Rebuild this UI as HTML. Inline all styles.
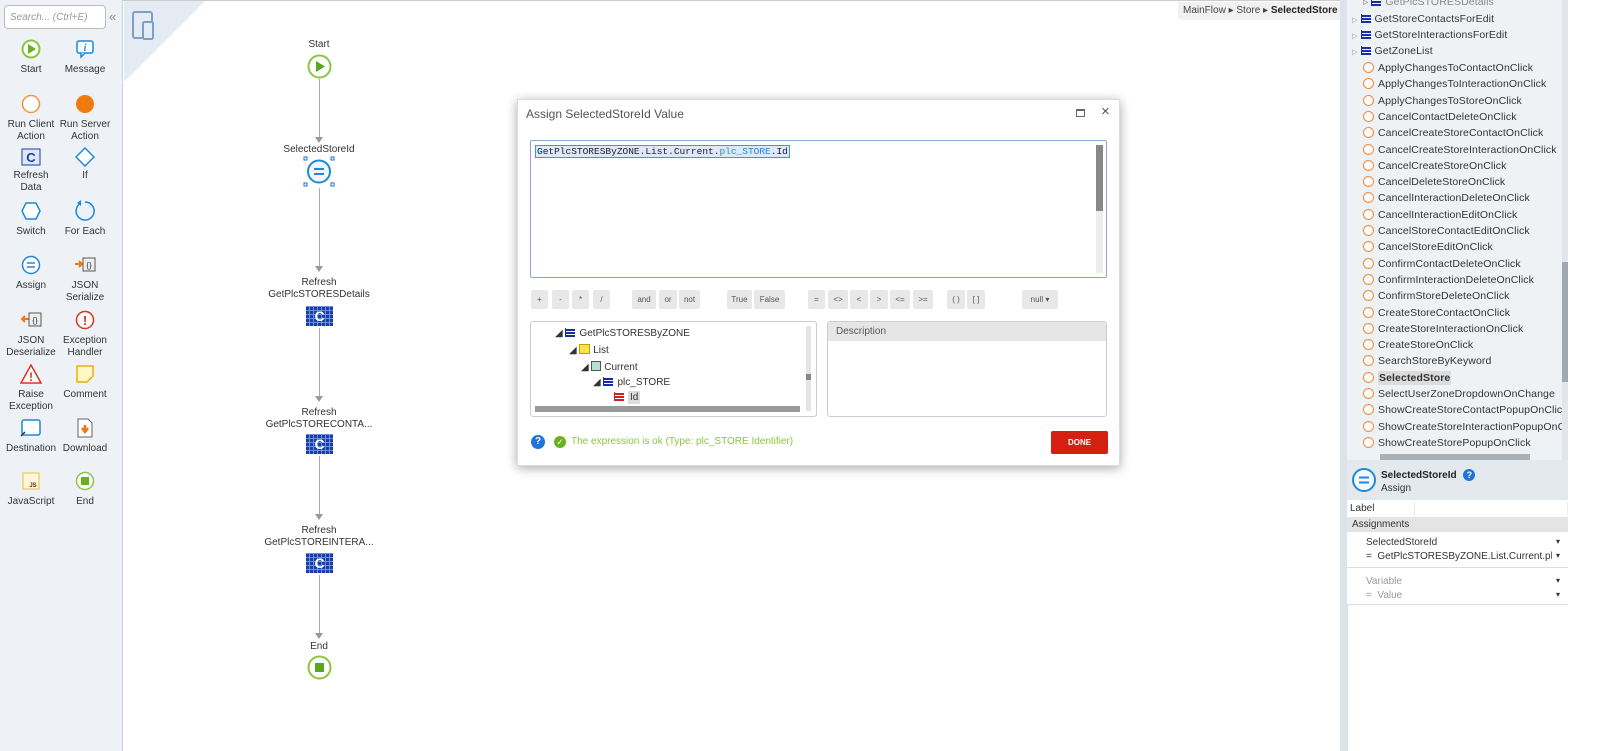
<!DOCTYPE html>
<html><head><meta charset="utf-8"><style>
*{box-sizing:border-box;margin:0;padding:0}
body{width:1600px;height:751px;overflow:hidden;background:#fff;font-family:"Liberation Sans",sans-serif;font-size:10px;color:#333;position:relative}
.abs{position:absolute}
#tb{left:0;top:0;width:123px;height:751px;background:#eef2f6;border-right:1px solid #c9d2da}
.ti{position:absolute;width:60px;text-align:center;font-size:10px;color:#333;line-height:12px}
.ti .ic{height:22px;display:flex;justify-content:center;align-items:center;margin-bottom:4px}
.flab{position:absolute;text-align:center;font-size:10px;color:#333;line-height:12px;width:140px;left:249px}
.line{position:absolute;left:319px;width:1px;background:#aaa}
.arr{position:absolute;left:315px;width:0;height:0;border-left:4px solid transparent;border-right:4px solid transparent;border-top:6px solid #999}
.ref{position:absolute;left:306px;width:27px;height:20px;background:#1a3ea8;background-image:repeating-linear-gradient(90deg,transparent 0 3px,#6f8ee0 3px 4px),repeating-linear-gradient(0deg,transparent 0 3px,#6f8ee0 3px 4px);display:flex;align-items:center;justify-content:center;color:#fff;font-weight:bold;font-size:14px}
#dlg{left:517px;top:99px;width:603px;height:367px;background:#fff;border:1px solid #ddd;box-shadow:0 2px 10px rgba(0,0,0,.35)}
.btn{position:absolute;top:190px;height:19px;background:#e8e8e8;border-radius:2px;font-size:8px;color:#555;text-align:center;line-height:19px}
.rl{position:absolute;left:1363px;font-size:10.5px;letter-spacing:0.1px;color:#333;height:16px;line-height:16px;white-space:nowrap}
.rl .o{display:inline-block;width:11px;height:11px;border:1.5px solid #f08a3c;border-radius:50%;vertical-align:-2px;margin-right:4px;background:#fff}
.grid{display:inline-block;width:10px;height:9px;background:repeating-linear-gradient(0deg,#1a2ea0 0 2px,transparent 2px 3px);vertical-align:-1px;margin-right:4px;border-left:1px solid #1a2ea0}
</style></head><body>
<div id="tb" class="abs">
 <div class="abs" style="left:4px;top:5px;width:102px;height:24px;border:1px solid #bbb;border-radius:4px;background:#fff;font-size:10px;color:#999;font-style:italic;padding:6px 5px">Search... (Ctrl+E)</div>
 <div class="abs" style="left:109px;top:9px;font-size:13px;color:#888">«</div>
 <div class="ti" style="left:1px;top:38px"><div class="ic"><svg width="20" height="20"><circle cx="10" cy="10" r="8.5" fill="#fff" stroke="#8cc63f" stroke-width="2"/><path d="M7 5 L15 10 L7 15Z" fill="#6ab023"/></svg></div>Start</div>
 <div class="ti" style="left:55px;top:38px"><div class="ic"><svg width="20" height="20"><rect x="2" y="2" width="16" height="12" rx="2" fill="#fff" stroke="#1e88d9" stroke-width="1.5"/><path d="M6 14 L6 18 L10 14" fill="#fff" stroke="#1e88d9" stroke-width="1.5"/><text x="10" y="12" font-size="10" font-style="italic" font-weight="bold" fill="#1e88d9" text-anchor="middle" font-family="Liberation Serif">i</text></svg></div>Message</div>
 <div class="ti" style="left:1px;top:93px"><div class="ic"><svg width="20" height="20"><circle cx="10" cy="10" r="8.5" fill="#fff" stroke="#f5923e" stroke-width="1.5"/></svg></div>Run Client<br>Action</div>
 <div class="ti" style="left:55px;top:93px"><div class="ic"><svg width="20" height="20"><circle cx="10" cy="10" r="9" fill="#f07a10"/></svg></div>Run Server<br>Action</div>
 <div class="ti" style="left:1px;top:148px"><div class="ic" style="height:18px"><svg width="20" height="18"><rect x="1" y="1" width="18" height="16" fill="#dfe8f8" stroke="#1a3ea8"/><text x="10" y="14" font-size="13" font-weight="bold" fill="#1a3ea8" text-anchor="middle">C</text></svg></div>Refresh<br>Data</div>
 <div class="ti" style="left:55px;top:148px"><div class="ic" style="height:18px"><svg width="20" height="20"><path d="M10 1 L19 10 L10 19 L1 10Z" fill="#fff" stroke="#1e88d9" stroke-width="1.5"/></svg></div>If</div>
 <div class="ti" style="left:1px;top:200px"><div class="ic"><svg width="20" height="20"><path d="M5 2 L15 2 L19 10 L15 18 L5 18 L1 10Z" fill="#fff" stroke="#1e88d9" stroke-width="1.5"/></svg></div>Switch</div>
 <div class="ti" style="left:55px;top:200px"><div class="ic"><svg width="22" height="22"><path d="M7 3 A9 9 0 1 0 11 2" fill="none" stroke="#1e88d9" stroke-width="1.5"/><path d="M7 0 L7 6 L3 3Z" fill="#1e88d9"/></svg></div>For Each</div>
 <div class="ti" style="left:1px;top:254px"><div class="ic"><svg width="20" height="20"><circle cx="10" cy="10" r="8.5" fill="#fff" stroke="#1e88d9" stroke-width="1.5"/><path d="M6 8h8M6 12h8" stroke="#1e88d9" stroke-width="1.5"/></svg></div>Assign</div>
 <div class="ti" style="left:55px;top:254px"><div class="ic"><svg width="22" height="18"><path d="M1 8h7M5 5l3 3-3 3" stroke="#f07a10" stroke-width="2" fill="none"/><rect x="9" y="2" width="12" height="13" fill="#eee" stroke="#555"/><text x="15" y="12" font-size="8" text-anchor="middle" fill="#333">{}</text></svg></div>JSON<br>Serialize</div>
 <div class="ti" style="left:1px;top:309px"><div class="ic"><svg width="22" height="18"><path d="M9 8H2M5 5L2 8l3 3" stroke="#f07a10" stroke-width="2" fill="none"/><rect x="9" y="2" width="12" height="13" fill="#eee" stroke="#555"/><text x="15" y="12" font-size="8" text-anchor="middle" fill="#333">{}</text></svg></div>JSON<br>Deserialize</div>
 <div class="ti" style="left:55px;top:309px"><div class="ic"><svg width="20" height="20"><circle cx="10" cy="10" r="8.5" fill="#fff" stroke="#d9341f" stroke-width="1.5"/><text x="10" y="15" font-size="13" font-weight="bold" fill="#d9341f" text-anchor="middle">!</text></svg></div>Exception<br>Handler</div>
 <div class="ti" style="left:1px;top:363px"><div class="ic"><svg width="22" height="20"><path d="M11 1 L21 19 L1 19Z" fill="#fff" stroke="#d9341f" stroke-width="1.5"/><text x="11" y="17" font-size="12" font-weight="bold" fill="#d9341f" text-anchor="middle">!</text></svg></div>Raise<br>Exception</div>
 <div class="ti" style="left:55px;top:363px"><div class="ic"><svg width="18" height="18"><path d="M1 1h16v10l-6 6H1Z" fill="#fff7c8" stroke="#e7b10a" stroke-width="1.5"/></svg></div>Comment</div>
 <div class="ti" style="left:1px;top:417px"><div class="ic"><svg width="22" height="18"><rect x="2" y="1" width="18" height="15" rx="2" fill="#fff" stroke="#1e88d9" stroke-width="1.5"/><path d="M1 17 L5 13" stroke="#333" stroke-width="1.5"/></svg></div>Destination</div>
 <div class="ti" style="left:55px;top:417px"><div class="ic"><svg width="18" height="20"><path d="M2 1h10l4 4v14H2Z" fill="#fff" stroke="#666"/><path d="M9 7v6M6 10l3 4 3-4" stroke="#f07a10" stroke-width="2.5" fill="none"/></svg></div>Download</div>
 <div class="ti" style="left:1px;top:470px"><div class="ic"><svg width="18" height="18"><rect x="1" y="1" width="16" height="16" fill="#fff6d5" stroke="#e8c050"/><text x="11" y="15" font-size="6" font-weight="bold" fill="#333" text-anchor="middle">JS</text></svg></div>JavaScript</div>
 <div class="ti" style="left:55px;top:470px"><div class="ic"><svg width="20" height="20"><circle cx="10" cy="10" r="8.5" fill="#fff" stroke="#8cc63f" stroke-width="1.5"/><rect x="6" y="6" width="8" height="8" fill="#6ab023"/></svg></div>End</div>
</div>
<svg class="abs" style="left:124px;top:0" width="82" height="82"><path d="M0 0H82L0 82Z" fill="#e4ebf2"/><rect x="9" y="12" width="19" height="26" rx="2" fill="none" stroke="#7da0c8" stroke-width="2"/><rect x="19" y="22" width="10" height="17" rx="1.5" fill="#e4ebf2" stroke="#7da0c8" stroke-width="2"/></svg>
<div class="abs" style="left:123px;top:0;width:1218px;height:1px;background:#ccc"></div>
<div class="abs" style="left:1178px;top:2px;width:162px;height:18px;background:#f1f1f1;border-radius:0 0 0 4px;font-size:10px;color:#444;line-height:18px;padding-left:5px">MainFlow ▸ Store ▸ <b style="color:#222">SelectedStore</b></div>
<div class="flab" style="top:39px">Start</div>
<svg class="abs" style="left:307px;top:54px" width="25" height="25"><circle cx="12.5" cy="12.5" r="11" fill="#fff" stroke="#8cc63f" stroke-width="2"/><path d="M9 7 L18 12.5 L9 18Z" fill="#56a91c"/></svg>
<div class="line" style="top:79px;height:60px"></div><div class="arr" style="top:137px"></div>
<div class="flab" style="top:144px">SelectedStoreId</div>
<svg class="abs" style="left:302px;top:156px" width="35" height="32"><rect x="2" y="1" width="3" height="3" fill="none" stroke="#1e6fd9"/><rect x="29" y="1" width="3" height="3" fill="none" stroke="#1e6fd9"/><rect x="2" y="27" width="3" height="3" fill="none" stroke="#1e6fd9"/><rect x="29" y="27" width="3" height="3" fill="none" stroke="#1e6fd9"/><circle cx="17" cy="15.5" r="11" fill="#f4f8fc" stroke="#1e88d9" stroke-width="2"/><path d="M12 13h10M12 18h10" stroke="#1e88d9" stroke-width="2"/></svg>
<div class="line" style="top:188px;height:80px"></div><div class="arr" style="top:266px"></div>
<div class="flab" style="top:277px">Refresh<br>GetPlcSTORESDetails</div>
<div class="ref" style="top:306px">C</div>
<div class="line" style="top:328px;height:70px"></div><div class="arr" style="top:396px"></div>
<div class="flab" style="top:407px">Refresh<br>GetPlcSTORECONTA...</div>
<div class="ref" style="top:434px">C</div>
<div class="line" style="top:456px;height:60px"></div><div class="arr" style="top:514px"></div>
<div class="flab" style="top:525px">Refresh<br>GetPlcSTOREINTERA...</div>
<div class="ref" style="top:553px">C</div>
<div class="line" style="top:575px;height:60px"></div><div class="arr" style="top:633px"></div>
<div class="flab" style="top:641px">End</div>
<svg class="abs" style="left:307px;top:655px" width="25" height="25"><circle cx="12.5" cy="12.5" r="11" fill="#fff" stroke="#8cc63f" stroke-width="2"/><rect x="8" y="8" width="9" height="9" fill="#56a91c"/></svg>
<div id="dlg" class="abs">
 <div class="abs" style="left:8px;top:7px;font-size:12px;color:#555">Assign SelectedStoreId Value</div>
 <div class="abs" style="left:558px;top:9px;width:9px;height:8px;border:1px solid #666;border-top-width:2px"></div>
 <div class="abs" style="left:583px;top:3px;font-size:15px;color:#555">×</div>
 <div class="abs" style="left:12px;top:40px;width:577px;height:138px;border:1px solid #8aa7c7;border-radius:2px">
  <div class="abs" style="left:4px;top:4px;font-family:'Liberation Mono',monospace;font-size:9.5px;color:#222;background:#dce9fb;border:1px solid #4a90e2;padding:0 1px">GetPlcSTORESByZONE.List.Current.<span style="color:#2b8ac0">plc_STORE</span>.Id</div>
  <div class="abs" style="right:3px;top:4px;width:7px;height:128px;background:#eee"><div style="height:66px;background:#888"></div></div>
 </div>
 <div class="btn" style="left:13px;width:17px">+</div><div class="btn" style="left:34px;width:17px">-</div><div class="btn" style="left:54px;width:17px">*</div><div class="btn" style="left:75px;width:17px">/</div>
 <div class="btn" style="left:114px;width:24px">and</div><div class="btn" style="left:141px;width:18px">or</div><div class="btn" style="left:161px;width:21px">not</div>
 <div class="btn" style="left:209px;width:25px">True</div><div class="btn" style="left:236px;width:31px">False</div>
 <div class="btn" style="left:290px;width:17px">=</div><div class="btn" style="left:310px;width:20px">&lt;&gt;</div><div class="btn" style="left:332px;width:18px">&lt;</div><div class="btn" style="left:352px;width:18px">&gt;</div><div class="btn" style="left:372px;width:20px">&lt;=</div><div class="btn" style="left:395px;width:20px">&gt;=</div>
 <div class="btn" style="left:429px;width:18px">( )</div><div class="btn" style="left:449px;width:18px">[ ]</div>
 <div class="btn" style="left:504px;width:36px">null ▾</div>
 <div class="abs" style="left:12px;top:221px;width:287px;height:96px;border:1px solid #ccc;border-radius:3px;font-size:10px;color:#333">
  <div class="abs" style="left:24px;top:6px">◢ <span class="grid"></span>GetPlcSTORESByZONE</div>
  <div class="abs" style="left:38px;top:22px">◢ <span style="display:inline-block;width:11px;height:10px;border:1px solid #c89a00;background:#ffe14a;vertical-align:-1px"></span> List</div>
  <div class="abs" style="left:50px;top:39px">◢ <span style="display:inline-block;width:10px;height:10px;border:1px solid #555;background:#b4e4cc;vertical-align:-1px"></span> Current</div>
  <div class="abs" style="left:62px;top:55px">◢ <span class="grid"></span>plc_STORE</div>
  <div class="abs" style="left:83px;top:70px"><span class="grid" style="background:repeating-linear-gradient(0deg,#d02020 0 2px,transparent 2px 3px);border-color:#d02020"></span><span style="background:#ddd;padding:1px 2px">Id</span></div>
  <div class="abs" style="left:4px;top:84px;width:265px;height:6px;background:#999"></div>
  <div class="abs" style="left:275px;top:4px;width:5px;height:85px;background:#e4e4e4"><div style="margin-top:48px;height:6px;background:#888"></div></div>
 </div>
 <div class="abs" style="left:309px;top:221px;width:280px;height:96px;border:1px solid #ccc;border-radius:3px">
  <div style="height:19px;background:#e6e6e6;font-size:10px;color:#555;padding:4px 8px">Description</div>
 </div>
 <div class="abs" style="left:13px;top:335px;width:14px;height:14px;border-radius:50%;background:#1e74d9;color:#fff;font-size:10px;font-weight:bold;text-align:center;line-height:14px">?</div>
 <div class="abs" style="left:36px;top:336px;width:12px;height:12px;border-radius:50%;background:#6ab023;color:#fff;font-size:9px;text-align:center;line-height:12px">✓</div>
 <div class="abs" style="left:53px;top:336px;font-size:10px;color:#8cc63f">The expression is ok (Type: plc_STORE Identifier)</div>
 <div class="abs" style="left:533px;top:331px;width:57px;height:23px;background:#d32010;border-radius:2px;color:#fff;font-size:8px;font-weight:bold;text-align:center;line-height:23px">DONE</div>
</div>
<div class="abs" style="left:1340px;top:0;width:7px;height:751px;background:#dde3e8"></div>
<div class="abs" style="left:1347px;top:0;width:221px;height:460px;background:#eef2f5"></div>
<div class="abs" style="left:1562px;top:0;width:6px;height:460px;background:#e2e6ea"><div style="margin-top:262px;height:120px;background:#a0a8b0"></div></div>
<div class="abs" style="left:1380px;top:454px;width:150px;height:6px;background:#a8b0b8"></div>
<div class="abs" style="left:1568px;top:0;width:32px;height:751px;background:#fff"></div>
<div class="rl" style="top:-6px;color:#888">▹ <span class="grid"></span>GetPlcSTORESDetails</div>
<div class="rl" style="top:11px;left:1352px"><span style="color:#999;font-size:7px">▷</span> <span class="grid"></span>GetStoreContactsForEdit</div>
<div class="rl" style="top:27px;left:1352px"><span style="color:#999;font-size:7px">▷</span> <span class="grid"></span>GetStoreInteractionsForEdit</div>
<div class="rl" style="top:43px;left:1352px"><span style="color:#999;font-size:7px">▷</span> <span class="grid"></span>GetZoneList</div>
<div class="rl" style="top:60px"><span class="o"></span>ApplyChangesToContactOnClick</div>
<div class="rl" style="top:76.3px"><span class="o"></span>ApplyChangesToInteractionOnClick</div>
<div class="rl" style="top:92.6px"><span class="o"></span>ApplyChangesToStoreOnClick</div>
<div class="rl" style="top:108.9px"><span class="o"></span>CancelContactDeleteOnClick</div>
<div class="rl" style="top:125.2px"><span class="o"></span>CancelCreateStoreContactOnClick</div>
<div class="rl" style="top:141.5px"><span class="o"></span>CancelCreateStoreInteractionOnClick</div>
<div class="rl" style="top:157.8px"><span class="o"></span>CancelCreateStoreOnClick</div>
<div class="rl" style="top:174.1px"><span class="o"></span>CancelDeleteStoreOnClick</div>
<div class="rl" style="top:190.4px"><span class="o"></span>CancelInteractionDeleteOnClick</div>
<div class="rl" style="top:206.7px"><span class="o"></span>CancelInteractionEditOnClick</div>
<div class="rl" style="top:223px"><span class="o"></span>CancelStoreContactEditOnClick</div>
<div class="rl" style="top:239.3px"><span class="o"></span>CancelStoreEditOnClick</div>
<div class="rl" style="top:255.6px"><span class="o"></span>ConfirmContactDeleteOnClick</div>
<div class="rl" style="top:271.9px"><span class="o"></span>ConfirmInteractionDeleteOnClick</div>
<div class="rl" style="top:288.2px"><span class="o"></span>ConfirmStoreDeleteOnClick</div>
<div class="rl" style="top:304.5px"><span class="o"></span>CreateStoreContactOnClick</div>
<div class="rl" style="top:320.8px"><span class="o"></span>CreateStoreInteractionOnClick</div>
<div class="rl" style="top:337.1px"><span class="o"></span>CreateStoreOnClick</div>
<div class="rl" style="top:353.4px"><span class="o"></span>SearchStoreByKeyword</div>
<div class="rl" style="top:369.7px"><span class="o"></span><b style="background:#dcdcdc;padding:1px 1px">SelectedStore</b></div>
<div class="rl" style="top:386px"><span class="o"></span>SelectUserZoneDropdownOnChange</div>
<div class="rl" style="top:402.3px"><span class="o"></span>ShowCreateStoreContactPopupOnClick</div>
<div class="rl" style="top:418.6px"><span class="o"></span>ShowCreateStoreInteractionPopupOnClick</div>
<div class="rl" style="top:434.9px"><span class="o"></span>ShowCreateStorePopupOnClick</div>
<div class="abs" style="left:1562px;top:0;width:6px;height:460px;background:#e2e6ea"><div style="margin-top:262px;height:120px;background:#a0a8b0"></div></div>
<div class="abs" style="left:1568px;top:0;width:32px;height:751px;background:#fff"></div>
<div class="abs" style="left:1347px;top:460px;width:221px;height:40px;background:#e4e9ed"></div>
<svg class="abs" style="left:1351px;top:467px" width="26" height="26"><circle cx="13" cy="13" r="11" fill="#f4f8fc" stroke="#1e88d9" stroke-width="2"/><path d="M8 10.5h10M8 15.5h10" stroke="#1e88d9" stroke-width="2"/></svg>
<div class="abs" style="left:1381px;top:469px;font-size:10px;font-weight:bold;color:#222">SelectedStoreId <span style="display:inline-block;width:12px;height:12px;border-radius:50%;background:#1e74d9;color:#fff;text-align:center;line-height:12px;font-size:9px;margin-left:4px">?</span></div>
<div class="abs" style="left:1381px;top:483px;font-size:10px;color:#333">Assign</div>
<div class="abs" style="left:1347px;top:502px;width:221px;height:14px;background:#fff;font-size:10px;padding-left:3px;line-height:14px;border-right:1px solid #eee">Label<span class="abs" style="left:67px;top:0;width:1px;height:14px;background:#e4e9ed"></span></div>
<div class="abs" style="left:1347px;top:517px;width:221px;height:15px;background:#e4e4e4;font-size:10px;padding-left:5px;line-height:15px">Assignments</div>
<div class="abs" style="left:1366px;top:537px;font-size:10px;color:#333">SelectedStoreId</div>
<div class="abs" style="left:1366px;top:551px;width:186px;overflow:hidden;white-space:nowrap;font-size:10px;color:#333">= &nbsp;GetPlcSTORESByZONE.List.Current.plc_S</div>
<div class="abs" style="left:1556px;top:537px;font-size:8px">▾</div><div class="abs" style="left:1556px;top:551px;font-size:8px">▾</div>
<div class="abs" style="left:1347px;top:567px;width:221px;height:1px;background:#ddd"></div>
<div class="abs" style="left:1366px;top:576px;font-size:10px;color:#999">Variable</div>
<div class="abs" style="left:1366px;top:590px;font-size:10px;color:#999">= &nbsp;Value</div>
<div class="abs" style="left:1556px;top:576px;font-size:8px">▾</div><div class="abs" style="left:1556px;top:590px;font-size:8px">▾</div>
<div class="abs" style="left:1347px;top:604px;width:221px;height:1px;background:#ddd"></div>
<div class="abs" style="left:1347px;top:605px;width:1px;height:146px;background:#ddd"></div>
</body></html>
